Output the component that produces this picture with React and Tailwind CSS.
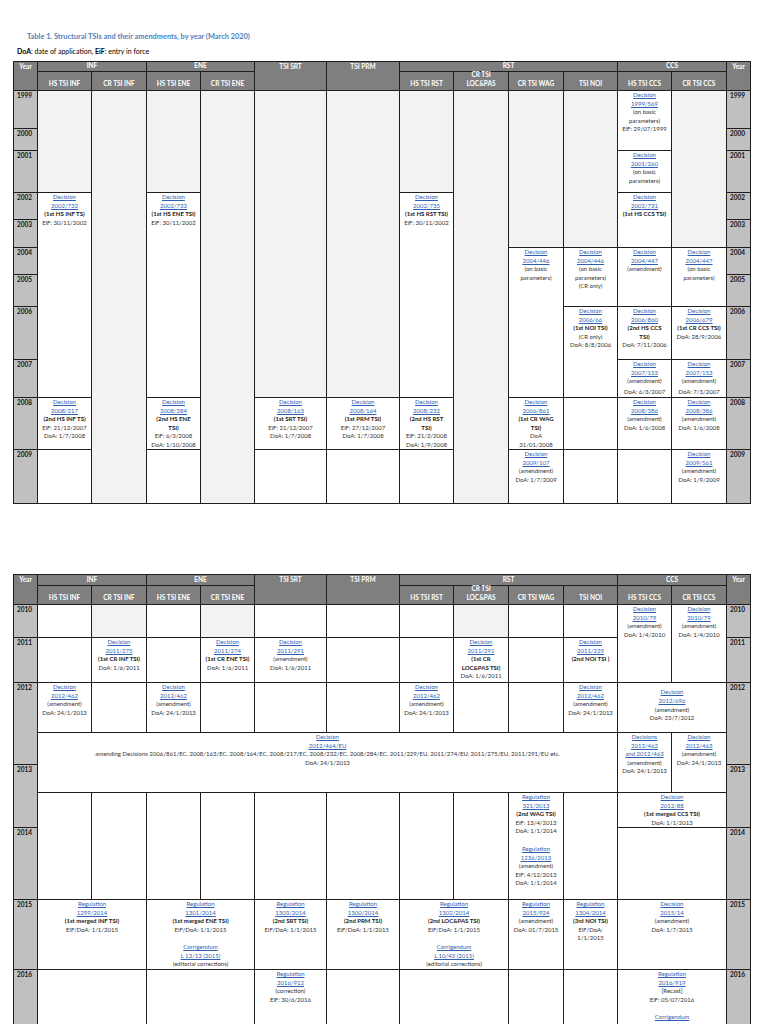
import React from "react";

const W = "bg-white";
const G = "bg-[#f2f2f2]";

const COLS =
  "grid-cols-[23px_53px_54px_53px_53px_71px_72px_53px_54px_54px_53px_53px_54px_23px]";

const HEADS = [
  ["col-start-1 row-start-1 row-span-2", "top", ["Year"]],
  ["col-start-2 col-span-2 row-start-1", "mid", ["INF"]],
  ["col-start-4 col-span-2 row-start-1", "mid", ["ENE"]],
  ["col-start-6 row-start-1 row-span-2", "top", ["TSI SRT"]],
  ["col-start-7 row-start-1 row-span-2", "top", ["TSI PRM"]],
  ["col-start-8 col-span-4 row-start-1", "mid", ["RST"]],
  ["col-start-12 col-span-2 row-start-1", "mid", ["CCS"]],
  ["col-start-14 row-start-1 row-span-2", "top", ["Year"]],
  ["col-start-2 row-start-2", "bot", ["HS TSI INF"]],
  ["col-start-3 row-start-2", "bot", ["CR TSI INF"]],
  ["col-start-4 row-start-2", "bot", ["HS TSI ENE"]],
  ["col-start-5 row-start-2", "bot", ["CR TSI ENE"]],
  ["col-start-8 row-start-2", "bot", ["HS TSI RST"]],
  ["col-start-9 row-start-2", "bot", ["CR TSI", "LOC&PAS"]],
  ["col-start-10 row-start-2", "bot", ["CR TSI WAG"]],
  ["col-start-11 row-start-2", "bot", ["TSI NOI"]],
  ["col-start-12 row-start-2", "bot", ["HS TSI CCS"]],
  ["col-start-13 row-start-2", "bot", ["CR TSI CCS"]],
];

const YEARS_1 = [
  ["row-start-3", "1999"],
  ["row-start-4", "2000"],
  ["row-start-5", "2001"],
  ["row-start-6", "2002"],
  ["row-start-7", "2003"],
  ["row-start-8", "2004"],
  ["row-start-9", "2005"],
  ["row-start-10", "2006"],
  ["row-start-11", "2007"],
  ["row-start-12", "2008"],
  ["row-start-13", "2009"],
];

const YEARS_2 = [
  ["row-start-3", "2010"],
  ["row-start-4", "2011"],
  ["row-start-5 row-span-2", "2012"],
  ["row-start-7 row-span-2", "2013"],
  ["row-start-9", "2014"],
  ["row-start-10", "2015"],
  ["row-start-11", "2016"],
];

const CELLS_1 = [
  ["col-start-2 row-start-3 row-span-3", G, []],
  ["col-start-2 row-start-6 row-span-6", W, ["@Decision", "@2002/732", "*(1st HS INF TS)", "EiF: 30/11/2002"]],
  ["col-start-2 row-start-12", W, ["@Decision", "@2008/217", "*(2nd HS INF TS)", "EiF: 21/12/2007", "DoA: 1/7/2008"]],
  ["col-start-2 row-start-13", W, []],
  ["col-start-3 row-start-3 row-span-11", G, []],
  ["col-start-4 row-start-3 row-span-3", G, []],
  ["col-start-4 row-start-6 row-span-6", W, ["@Decision", "@2002/733", "*(1st HS ENE TSI)", "EiF: 30/11/2002"]],
  ["col-start-4 row-start-12", W, ["@Decision", "@2008/284", "*(2nd HS ENE", "*TSI)", "EiF: 6/3/2008", "DoA: 1/10/2008"]],
  ["col-start-4 row-start-13", W, []],
  ["col-start-5 row-start-3 row-span-11", G, []],
  ["col-start-6 row-start-3 row-span-9", G, []],
  ["col-start-6 row-start-12", W, ["@Decision", "@2008/163", "*(1st SRT TSI)", "EiF: 21/12/2007", "DoA: 1/7/2008"]],
  ["col-start-6 row-start-13", W, []],
  ["col-start-7 row-start-3 row-span-9", G, []],
  ["col-start-7 row-start-12", W, ["@Decision", "@2008/164", "*(1st PRM TSI)", "EiF: 27/12/2007", "DoA: 1/7/2008"]],
  ["col-start-7 row-start-13", W, []],
  ["col-start-8 row-start-3 row-span-3", G, []],
  ["col-start-8 row-start-6 row-span-6", W, ["@Decision", "@2002/735", "*(1st HS RST TSI)", "EiF: 30/11/2002"]],
  ["col-start-8 row-start-12", W, ["@Decision", "@2008/232", "*(2nd HS RST", "*TSI)", "EiF: 21/2/2008", "DoA: 1/9/2008"]],
  ["col-start-8 row-start-13", W, []],
  ["col-start-9 row-start-3 row-span-11", G, []],
  ["col-start-10 row-start-3 row-span-5", G, []],
  ["col-start-10 row-start-8 row-span-4", W, ["@Decision", "@2004/446", "(on basic", "parameters)"]],
  ["col-start-10 row-start-12", W, ["@Decision", "@2006/861", "*(1st CR WAG", "*TSI)", "DoA", "31/01/2008"]],
  ["col-start-10 row-start-13", W, ["@Decision", "@2009/107", "(amendment)", "DoA: 1/7/2009"]],
  ["col-start-11 row-start-3 row-span-5", G, []],
  ["col-start-11 row-start-8 row-span-2", W, ["@Decision", "@2004/446", "(on basic", "parameters)", "(CR only)"]],
  ["col-start-11 row-start-10 row-span-2", W, ["@Decision", "@2006/66", "*(1st NOI TSI)", "(CR only)", "DoA: 8/8/2006"]],
  ["col-start-11 row-start-12", W, []],
  ["col-start-11 row-start-13", W, []],
  ["col-start-12 row-start-3 row-span-2", W, ["@Decision", "@1999/569", "(on basic", "parameters)", "EiF: 29/07/1999"]],
  ["col-start-12 row-start-5", W, ["@Decision", "@2001/260", "(on basic", "parameters)"]],
  ["col-start-12 row-start-6 row-span-2", W, ["@Decision", "@2002/731", "*(1st HS CCS TSI)"]],
  ["col-start-12 row-start-8 row-span-2", W, ["@Decision", "@2004/447", "(amendment)"]],
  ["col-start-12 row-start-10", W, ["@Decision", "@2006/860", "*(2nd HS CCS", "*TSI)", "DoA: 7/11/2006"]],
  ["col-start-12 row-start-11", W, ["@Decision", "@2007/153", "(amendment)", "~", "DoA: 6/3/2007"]],
  ["col-start-12 row-start-12", W, ["@Decision", "@2008/386", "(amendment)", "DoA: 1/6/2008"]],
  ["col-start-12 row-start-13", W, []],
  ["col-start-13 row-start-3 row-span-5", G, []],
  ["col-start-13 row-start-8 row-span-2", W, ["@Decision", "@2004/447", "(on basic", "parameters)"]],
  ["col-start-13 row-start-10", W, ["@Decision", "@2006/679", "*(1st CR CCS TSI)", "DoA: 28/9/2006"]],
  ["col-start-13 row-start-11", W, ["@Decision", "@2007/153", "(amendment)", "~", "DoA: 7/3/2007"]],
  ["col-start-13 row-start-12", W, ["@Decision", "@2008/386", "(amendment)", "DoA: 1/6/2008"]],
  ["col-start-13 row-start-13", W, ["@Decision", "@2009/561", "(amendment)", "DoA: 1/9/2009"]],
];

const D462 = ["@Decision", "@2012/462", "(amendment)", "DoA: 24/1/2013"];
const D79 = ["@Decision", "@2010/79", "(amendment)", "DoA: 1/4/2010"];

const CELLS_2 = [
  ["col-start-2 row-start-3", W, []],
  ["col-start-3 row-start-3", G, []],
  ["col-start-4 row-start-3", W, []],
  ["col-start-5 row-start-3", G, []],
  ["col-start-6 row-start-3", W, []],
  ["col-start-7 row-start-3", W, []],
  ["col-start-8 row-start-3", W, []],
  ["col-start-9 row-start-3", G, []],
  ["col-start-10 row-start-3", W, []],
  ["col-start-11 row-start-3", W, []],
  ["col-start-12 row-start-3 row-span-2", W, D79],
  ["col-start-13 row-start-3 row-span-2", W, D79],
  ["col-start-2 row-start-4", W, []],
  ["col-start-3 row-start-4", W, ["@Decision", "@2011/275", "*(1st CR INF TSI)", "DoA: 1/6/2011"]],
  ["col-start-4 row-start-4", W, []],
  ["col-start-5 row-start-4", W, ["@Decision", "@2011/274", "*(1st CR ENE TSI)", "DoA: 1/6/2011"]],
  ["col-start-6 row-start-4", W, ["@Decision", "@2011/291", "(amendment)", "DoA: 1/6/2011"]],
  ["col-start-7 row-start-4", W, []],
  ["col-start-8 row-start-4", W, []],
  ["col-start-9 row-start-4", W, ["@Decision", "@2011/291", "*(1st CR", "*LOC&PAS TSI)", "DoA: 1/6/2011"]],
  ["col-start-10 row-start-4", W, []],
  ["col-start-11 row-start-4", W, ["@Decision", "@2011/229", "*(2nd NOI TSI )"]],
  ["col-start-2 row-start-5", W, D462],
  ["col-start-3 row-start-5", W, []],
  ["col-start-4 row-start-5", W, D462],
  ["col-start-5 row-start-5", W, []],
  ["col-start-6 row-start-5", W, []],
  ["col-start-7 row-start-5", W, []],
  ["col-start-8 row-start-5", W, D462],
  ["col-start-9 row-start-5", W, []],
  ["col-start-10 row-start-5", W, []],
  ["col-start-11 row-start-5", W, D462],
  ["col-start-12 col-span-2 row-start-5 justify-center pb-[4px]", W, ["@Decision", "@2012/696", "(amendment)", "DoA: 23/7/2012"]],
  [
    "col-start-2 col-span-10 row-start-6 row-span-2",
    W,
    [
      "@Decision",
      "@2012/464/EU",
      "amending Decisions 2006/861/EC, 2008/163/EC, 2008/164/EC, 2008/217/EC, 2008/232/EC, 2008/284/EC, 2011/229/EU, 2011/274/EU, 2011/275/EU, 2011/291/EU etc.",
      "DoA: 24/1/2013",
    ],
  ],
  ["col-start-12 row-start-6 row-span-2", W, ["@Decisions", "@2012/462", "@and 2012/463", "(amendment)", "DoA: 24/1/2013"]],
  ["col-start-13 row-start-6 row-span-2", W, ["@Decision", "@2012/463", "(amendment)", "DoA: 24/1/2013"]],
  ["col-start-2 row-start-8 row-span-2", W, []],
  ["col-start-3 row-start-8 row-span-2", W, []],
  ["col-start-4 row-start-8 row-span-2", W, []],
  ["col-start-5 row-start-8 row-span-2", W, []],
  ["col-start-6 row-start-8 row-span-2", W, []],
  ["col-start-7 row-start-8 row-span-2", W, []],
  ["col-start-8 row-start-8 row-span-2", W, []],
  ["col-start-9 row-start-8 row-span-2", W, []],
  [
    "col-start-10 row-start-8 row-span-2",
    W,
    [
      "@Regulation",
      "@321/2013",
      "*(2nd WAG TSI)",
      "EiF: 13/4/2013",
      "DoA: 1/1/2014",
      "",
      "@Regulation",
      "@1236/2013",
      "(amendment)",
      "EiF: 4/12/2013",
      "DoA: 1/1/2014",
    ],
  ],
  ["col-start-11 row-start-8 row-span-2", W, []],
  ["col-start-12 col-span-2 row-start-8", W, ["@Decision", "@2012/88", "*(1st merged CCS TSI)", "DoA: 1/1/2013"]],
  ["col-start-12 col-span-2 row-start-9", W, []],
  ["col-start-2 col-span-2 row-start-10", W, ["@Regulation", "@1299/2014", "*(1st merged INF TSI)", "EiF/DoA: 1/1/2015"]],
  [
    "col-start-4 col-span-2 row-start-10",
    W,
    ["@Regulation", "@1301/2014", "*(1st merged ENE TSI)", "EiF/DoA: 1/1/2015", "", "@Corrigendum", "@L 13/13 (2015)", "(editorial corrections)"],
  ],
  ["col-start-6 row-start-10", W, ["@Regulation", "@1303/2014", "*(2nd SRT TSI)", "EiF/DoA: 1/1/2015"]],
  ["col-start-7 row-start-10", W, ["@Regulation", "@1300/2014", "*(2nd PRM TSI)", "EiF/DoA: 1/1/2015"]],
  [
    "col-start-8 col-span-2 row-start-10",
    W,
    ["@Regulation", "@1302/2014", "*(2nd LOC&PAS TSI)", "EiF/DoA: 1/1/2015", "", "@Corrigendum", "@L 10/45 (2015)", "(editorial corrections)"],
  ],
  ["col-start-10 row-start-10", W, ["@Regulation", "@2015/924", "(amendment)", "DoA: 01/7/2015"]],
  ["col-start-11 row-start-10", W, ["@Regulation", "@1304/2014", "*(3rd NOI TSI)", "EiF/DoA:", "1/1/2015"]],
  ["col-start-12 col-span-2 row-start-10", W, ["@Decision", "@2015/14", "(amendment)", "DoA: 1/7/2015"]],
  ["col-start-2 col-span-2 row-start-11", W, []],
  ["col-start-4 col-span-2 row-start-11", W, []],
  ["col-start-6 row-start-11", W, ["@Regulation", "@2016/912", "(correction)", "EiF: 30/6/2016"]],
  ["col-start-7 row-start-11", W, []],
  ["col-start-8 col-span-2 row-start-11", W, []],
  ["col-start-10 row-start-11", W, []],
  ["col-start-11 row-start-11", W, []],
  [
    "col-start-12 col-span-2 row-start-11",
    W,
    ["@Regulation", "@2016/919", "[Recast]", "EiF: 05/07/2016", "", "@Corrigendum", "@L 120/94 (2016)", "(editorial corrections)"],
  ],
];

function Line({ s }) {
  if (s === "") return <div className="h-[9px]" />;
  if (s === "~") return <div className="h-[2px]" />;
  if (s[0] === "@")
    return (
      <div className="whitespace-nowrap text-[#2f5fb3] underline underline-offset-[1px]">
        {s.slice(1)}
      </div>
    );
  if (s[0] === "*")
    return <div className="whitespace-nowrap font-bold text-[#1a1a1a]">{s.slice(1)}</div>;
  return <div className="whitespace-nowrap text-[#333]">{s}</div>;
}

function Head({ pos, v, lines }) {
  const align =
    v === "top" ? "justify-start pt-[1px]" : v === "mid" ? "justify-center" : "justify-end pb-[2px]";
  return (
    <div
      className={`${pos} ${align} flex flex-col items-center bg-[#7f7f7f] text-[6.5px] leading-[8.5px] font-bold text-white`}
    >
      {lines.map((l) => (
        <div key={l} className="whitespace-nowrap">
          {l}
        </div>
      ))}
    </div>
  );
}

function Table({ rows, years, cells, className }) {
  return (
    <div
      className={`${className} ml-[13px] grid w-[738px] ${COLS} ${rows} gap-px border border-[#1e1e1e] bg-[#1e1e1e]`}
    >
      {HEADS.map(([pos, v, lines]) => (
        <Head key={pos} pos={pos} v={v} lines={lines} />
      ))}
      {years.map(([r, y]) => (
        <React.Fragment key={y}>
          <div className={`col-start-1 ${r} bg-[#c0c0c0] pl-[3px] pt-[1px] text-[6.5px] leading-[8px] font-bold text-[#111]`}>
            {y}
          </div>
          <div className={`col-start-14 ${r} bg-[#c0c0c0] pl-[3px] pt-[1px] text-[6.5px] leading-[8px] font-bold text-[#111]`}>
            {y}
          </div>
        </React.Fragment>
      ))}
      {cells.map(([pos, bg, lines]) => (
        <div
          key={pos}
          className={`${pos} ${bg} flex flex-col items-center overflow-hidden text-center text-[6px] leading-[8.6px]`}
        >
          {lines.map((s, i) => (
            <Line key={i} s={s} />
          ))}
        </div>
      ))}
    </div>
  );
}

export default function App() {
  return (
    <div className="h-[1024px] w-[768px] overflow-hidden bg-white font-[Lato,sans-serif]">
      <div className="pl-[27px] pt-[32px] text-[7.4px] leading-[9px] font-bold text-[#4f81bd]">
        Table 1. Structural TSIs and their amendments, by year (March 2020)
      </div>
      <div className="mt-[6px] pl-[17px] text-[7px] leading-[9px] text-black">
        <span className="font-bold">DoA</span>: date of application, <span className="font-bold">EiF</span>: entry in force
      </div>
      <Table
        className="mt-[5px]"
        rows="grid-rows-[9px_18px_37px_21px_41px_26px_27px_26px_31px_52px_37px_51px_53px]"
        years={YEARS_1}
        cells={CELLS_1}
      />
      <Table
        className="mt-[70px]"
        rows="grid-rows-[10px_18px_32px_44px_49px_31px_27px_34px_71px_69px_70px]"
        years={YEARS_2}
        cells={CELLS_2}
      />
    </div>
  );
}
